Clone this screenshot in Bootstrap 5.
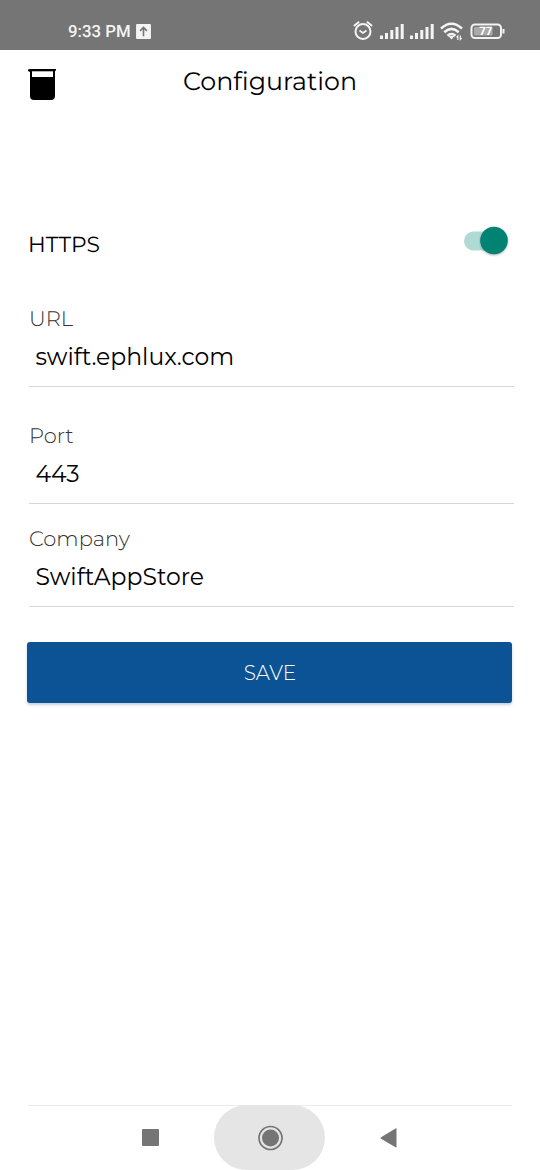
<!DOCTYPE html>
<html lang="en">
<head>
<meta charset="utf-8">
<meta name="viewport" content="width=device-width, initial-scale=1">
<title>Configuration</title>
<link href="https://cdn.jsdelivr.net/npm/bootstrap@5.3.0/dist/css/bootstrap.min.css" rel="stylesheet">
<style>
  body { font-family: Montserrat, Inter, "Liberation Sans", sans-serif; font-weight: 400; color: #000; background: #fff; text-rendering: geometricPrecision; }
  .screen { height: 1170px; overflow: hidden; }
  .statusbar { height: 50px; background: #757575; color: #f4f4f4; padding: 12px 34px 0 68px; }
  .status-icons { margin-top: 8px; }
  .clock { font: 500 16.800px/40px Roboto, sans-serif; height: 38px; }
  .clock-text { padding-top: 2px; }
  .appbar { height: 170px; padding: 12px 28px 0; display: grid; grid-template-columns: 28px 1fr 28px; }
  .beaker { margin-top: 6px; }
  .title { font-size: 25.300px; line-height: 41px; font-weight: 400; }
  .content { padding: 0 27px; }
  .https { height: 84px; padding: 9px 0 0 1px; }
  .https label { font-size: 21.800px; line-height: 33px; }
  .switch { width: 44px; height: 28px; margin-right: 5px; margin-top: -2px; }
  .field { margin: 0 -1px 0 2px; height: 83px; }
  .field-port { margin-top: 34px; }
  .field-company { margin-top: 20px; }
  .field label { display: block; font-size: 21px; font-weight: 300; line-height: 32px; height: 36px; color: #333; }
  .field input { height: 47px; padding: 0 6px 13px 6.500px; border: 0; border-bottom: 1px solid #d6d6d6; border-radius: 0; font-size: 23.500px; line-height: 34px; color: #000; background: none; }
  .save { width: 485px; height: 61px; padding-top: 7px; background: #0b5394 !important; border-radius: 3px; font-size: 20px; font-weight: 300; color: #fff !important; border: 0; box-shadow: 0 2px 3px rgba(30,60,110,.25); margin: 35px 0 0 .4px; }
  .navkeys { height: 65px; margin: 0 28px; padding-left: 113.500px; border-top: 1px solid #ececec; }
  .recent { margin-top: 23px; }
  .homekey { width: 111px; height: 65px; margin: -1px 54.500px 0 55.500px; border-radius: 33px; background: #e5e5e5; }
  .back { margin-top: 22px; }
</style>
</head>
<body>
<div class="screen d-flex flex-column">
  <div class="statusbar d-flex justify-content-between">
    <div class="clock d-flex align-items-center"><span class="clock-text">9:33 PM</span>
      <svg class="ms-1" width="17" height="17" viewBox="0 0 16 16"><rect x="1" y="1" width="14" height="14" rx="1" fill="#f4f4f4"/><path d="M8 12.500V4.500M4.800 7.400 8 4.200l3.200 3.200" fill="none" stroke="#757575" stroke-width="1.500"/></svg>
    </div>
    <svg class="status-icons" width="153" height="22" viewBox="353 20 153 22" fill="none" stroke="#f4f4f4">
      <circle cx="363" cy="31.500" r="7.500" stroke-width="2"/>
      <path d="M359.500 30.500l3.500 2.500 3.500-2.500" stroke-width="1.700"/>
      <path d="M354.500 25.500l4-3.300M371.500 25.500l-4-3.300" stroke-width="2" stroke-linecap="round"/>
      <path d="M381.500 39v-3.500M386.500 39v-6M391.800 39v-9M397 39V27M402.200 39V24M411.500 39v-3.500M416.500 39v-6M421.800 39v-9M427 39V27M432.200 39V24" stroke-width="3"/>
      <path d="M441 28.500q10.500-9.500 21 0M444.300 32.200q7.200-6.500 14.400 0M447.500 35.700q4-3.400 8 0" stroke-width="2.600"/>
      <path d="M448.500 36h6l-3 3.500z" fill="#f4f4f4" stroke="none"/>
      <path d="M457.800 40v-4l-1.300 1.300M460.300 35.500v4l1.300-1.300" stroke-width="1.200"/>
      <rect x="471.500" y="24.500" width="29.500" height="13.500" rx="3.500" stroke-width="2"/>
      <rect x="474" y="27" width="18.500" height="8.500" rx="1" fill="#aaa" stroke="none"/>
      <path d="M503.500 29v4.500" stroke-width="2"/>
      <text x="485.800" y="35.200" text-anchor="middle" font-family="Roboto" font-weight="700" font-size="11.500" fill="#fff" stroke="none">77</text>
    </svg>
  </div>
  <header class="appbar">
    <svg class="beaker" width="29" height="34" viewBox="0 0 29 34"><path d="M0 1.500 2 1h26v1.800h-1V28q0 4-4 4H6q-4 0-4-4V4L0 3z"/><path d="M4 3.300h21V9H4z" fill="#fff"/></svg>
    <h1 class="title text-center mb-0">Configuration</h1>
  </header>
  <main class="content flex-grow-1">
    <div class="https d-flex justify-content-between align-items-start">
      <label>HTTPS</label>
      <svg class="switch overflow-visible" viewBox="0 0 44 28" role="switch" aria-checked="true"><rect x="0" y="4.500" width="38" height="19" rx="9.500" fill="#b0dbd5"/><circle cx="30" cy="13.500" r="13.800" fill="#008373" style="filter:drop-shadow(0 1.500px 1px rgba(0,0,0,.3))"/></svg>
    </div>
    <div class="field"><label for="url">URL</label><input class="form-control shadow-none" id="url" value="swift.ephlux.com"></div>
    <div class="field field-port"><label for="port">Port</label><input class="form-control shadow-none" id="port" value="443"></div>
    <div class="field field-company"><label for="company">Company</label><input class="form-control shadow-none" id="company" value="SwiftAppStore"></div>
    <button class="btn save" type="button">SAVE</button>
  </main>
  <nav class="navkeys d-flex align-items-start">
    <svg class="recent" width="17" height="17"><rect width="17" height="17" rx="1" fill="#757575"/></svg>
    <div class="homekey d-flex align-items-center justify-content-center"><svg width="26" height="26" viewBox="0 0 26 26"><circle cx="13.500" cy="13" r="11.500" fill="none" stroke="#757575" stroke-width="1.700"/><circle cx="13.500" cy="13" r="8.500" fill="#757575"/></svg></div>
    <svg class="back" width="17" height="20"><path d="M1 9.300Q0 10 1 10.700L15.500 19.300q1 .5 1-.5V1q0-1-1-.5z" fill="#757575"/></svg>
  </nav>
</div>
<script src="https://cdn.jsdelivr.net/npm/bootstrap@5.3.0/dist/js/bootstrap.bundle.min.js"></script>
</body>
</html>
